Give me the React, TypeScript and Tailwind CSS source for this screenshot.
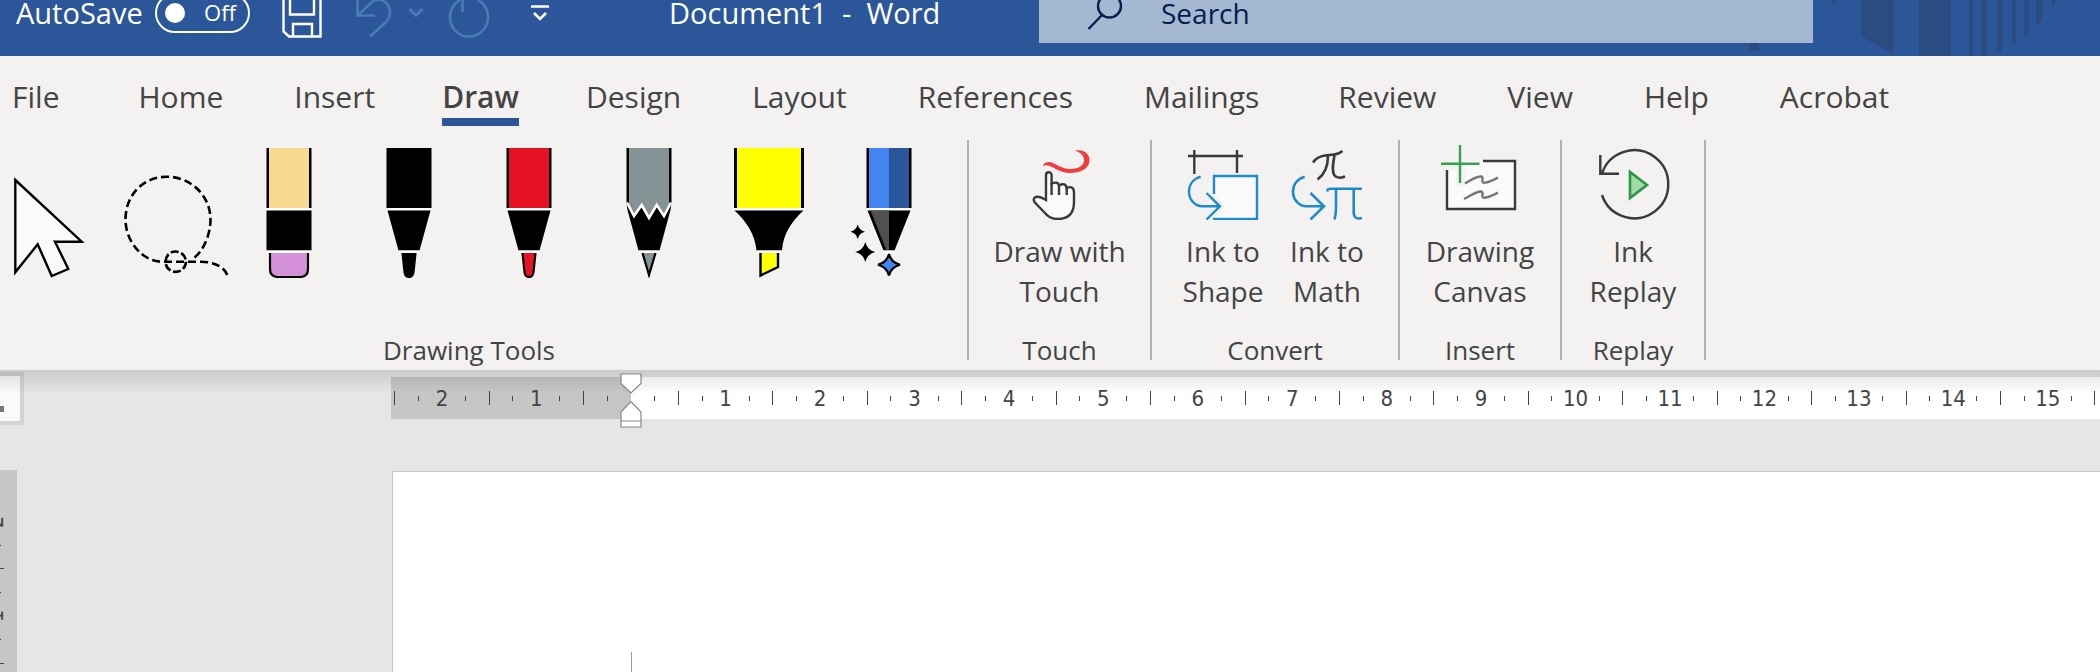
import type { ReactNode } from 'react'
import clsx from 'clsx'

const TABS = ['File', 'Home', 'Insert', 'Draw', 'Design', 'Layout', 'References', 'Mailings', 'Review', 'View', 'Help', 'Acrobat']

const STAR = 'M0 -10Q2 -2 10 0Q2 2 0 10Q-2 2 -10 0Q-2 -2 0 -10Z'

/* ---------- Quick access icons ---------- */

function SaveIcon() {
  return (
    <svg width="40" height="50" viewBox="0 0 40 50" fill="none" stroke="#fff" strokeWidth="2.4">
      <path d="M1.5 2V43.500L7 48.500H38.500V2Z" />
      <path d="M8 2V26.500H32V2M11 48V36H30V48" />
    </svg>
  )
}

function UndoIcon() {
  return (
    <svg width="36" height="48" viewBox="0 0 36 48" fill="none" stroke="#4a7ab8" strokeWidth="2.600">
      <path d="M1.500 6V26.500H19M2 26L15 14C22 7 34 12 34 24Q34 29 29 34L14 47.500" />
    </svg>
  )
}

function RedoIcon() {
  return (
    <svg width="42" height="50" viewBox="0 0 42 50" fill="none" stroke="#4a7ab8" strokeWidth="2.600">
      <path d="M12 12A19 19.500 0 1 0 30 12M14.500 24V6" />
    </svg>
  )
}

function Backdrop() {
  return (
    <svg className="absolute right-0 top-0" width="360" height="56" viewBox="1740 0 360 56" fill="#2b4c80" aria-hidden="true">
      <path d="M1749 0H1759V51H1749ZM1830 0H1835V6ZM1861 0H1894V54Q1872 44 1861 35ZM1919 0H1951V56H1919ZM1969 0H1973V56H1969ZM1982 0H1987V56H1982ZM1997 0H2002V50L1997 53ZM2012 0H2016V42L2012 45ZM2024 0H2029V33L2024 37ZM2036 0H2042V21L2036 26ZM2052 0H2057L2052 8Z" />
    </svg>
  )
}

/* ---------- Drawing tools ---------- */

function SelectTool() {
  return <path d="M26.300 32L92.700 93.700H66L79.300 121L62.700 128L48.700 96.300L26.300 124.300Z" fill="#fafafa" stroke="#000" strokeWidth="2.400" />
}

function LassoTool() {
  return (
    <g fill="none" stroke="#000" strokeWidth="2.600" strokeDasharray="8 4">
      <path d="M85.500 109.500C95 102 101.500 86 101.500 71.500C101.500 47 81 28.700 58 28.700C34 28.700 16.500 47 16.500 71.500C16.500 93 33 113.700 53 113.700H92C107 114 117 120 119 129.500" />
      <circle cx="66.700" cy="113.700" r="10.200" strokeDasharray="8 2.680" />
    </g>
  )
}

function EraserTool() {
  return (
    <>
      <path d="M37.500 0H82.500V60H37.500ZM37.500 62.500H82.500V102.500H37.500Z" />
      <path d="M40 0H80V60H40Z" fill="#f8da8f" />
      <path d="M37.500 60H82.500V62H37.500ZM37.500 102.500H82.500V105H37.500Z" fill="#fff" />
      <path d="M41 105V121Q41 129 49 129H71Q79 129 79 121V105" fill="#d490d9" stroke="#000" strokeWidth="2.200" />
    </>
  )
}

function PenTool({ color }: { color: string }) {
  return (
    <>
      <path d="M37.500 0H82.500V60H37.500ZM38.500 62.500H81.500L70.500 102.500H49.500Z" />
      <path d="M40 0H80V60H40Z" fill={color} />
      <path d="M37.500 60H82.500V62H37.500ZM49.500 102.500H70.500V105H49.500Z" fill="#fff" />
      <path d="M53.500 105L55.500 124Q56 129 60 129Q64 129 64.500 124L66.500 105" fill={color} stroke="#000" strokeWidth="2.200" />
    </>
  )
}

function PencilTool() {
  return (
    <>
      <path d="M37.500 0H82.500V55L81.500 62L70.500 102.500H49.500L38.500 62L37.500 55Z" />
      <path d="M40 0H80V58L75 68L67.700 57L60 70L52.700 57L45 68L40 58Z" fill="#859397" />
      <path d="M38 54.500L45 68L52.700 57L60 70L67.700 57L75 68L82 54.500" fill="none" stroke="#fff" strokeWidth="2.600" />
      <path d="M49.500 102.500H70.500V105H49.500Z" fill="#fff" />
      <path d="M53.500 105L60 127L66.500 105" fill="#859397" stroke="#000" strokeWidth="2.200" />
    </>
  )
}

function HighlighterTool() {
  return (
    <>
      <path d="M25 0H95V60H25ZM25.500 62.500H94.500C83 73 74 86 73 102.500H47.500C46 86 37 73 25.500 62.500Z" />
      <path d="M28 0H92V60H28Z" fill="#ffff00" />
      <path d="M25 60H95V62H25ZM47.500 102.500H73V105H47.500Z" fill="#fff" />
      <path d="M51.500 105V127.500L69 119V105" fill="#ffff00" stroke="#000" strokeWidth="2.400" />
    </>
  )
}

function ActionPenTool() {
  return (
    <>
      <path d="M37.500 0H82.500V60H37.500ZM38.500 62.500H81.500L65.500 102.500H54.500Z" />
      <path d="M40 0H60V60H40Z" fill="#4285f0" />
      <path d="M60 0H80V60H60Z" fill="#2b579a" />
      <path d="M41.500 62.500H60V102.500H57.500Z" fill="#505050" />
      <path d="M37.500 60H82.500V62H37.500ZM54 102.500H66V105H54Z" fill="#fff" />
      <path d={STAR} transform="translate(28.700 83.700) scale(.73)" />
      <path d={STAR} transform="translate(36.300 104)" />
      <path d="M60 106Q62 114.500 71 116.700Q62 119 60 127.500Q58 119 49 116.700Q58 114.500 60 106Z" fill="#4285f0" stroke="#000" strokeWidth="2.200" />
    </>
  )
}

const TOOLS: { name: string; art: ReactNode }[] = [
  { name: 'Select', art: <SelectTool /> },
  { name: 'Lasso Select', art: <LassoTool /> },
  { name: 'Eraser', art: <EraserTool /> },
  { name: 'Pen: Black', art: <PenTool color="#000" /> },
  { name: 'Pen: Red', art: <PenTool color="#e81224" /> },
  { name: 'Pencil: Gray', art: <PencilTool /> },
  { name: 'Highlighter: Yellow', art: <HighlighterTool /> },
  { name: 'Action Pen', art: <ActionPenTool /> },
]

/* ---------- Command icons, 80 x 80 ---------- */

function TouchIcon() {
  return (
    <>
      <path d="M23 25Q25 22 29 22C36 23 41 29 50 29C60 29 65 24 64 19Q63 13 55 10.500C64 9 70 14 69.500 21C69 29 60 33 50 33C40 33 34 27 28 25.500Q25 25 23.500 26Z" fill="#f03c3c" />
      <g fill="#fafafa" stroke="#3b3a39" strokeWidth="2.400">
        <path d="M26 60V35A2.800 2.800 0 0 1 31.600 35V43.500Q38 41 39 45.500Q45.500 42 46.700 48Q54 45 54 53V62Q54 79 37.500 79Q30 79 25 73L14.500 62Q12.500 58 16 57Q19 56 26 60Z" />
        <path d="M31.600 43V55M39 45V55M46.700 47V55" />
      </g>
    </>
  )
}

const CONVERT_ARROW = 'M17.700 36.700C10 39 6 45 6 51.700C6 60 12.500 66.300 19.300 66.300H37M23.500 53L37 66.300L23.500 79.500'

function ShapeIcon() {
  return (
    <g fill="none" strokeWidth="2.400">
      <path d="M5 16H60M11.300 10V34M54 10V33" stroke="#3b3a39" />
      <path d="M31 36H74V79H30L42.500 66.300L31 54.500Z" fill="#fafafa" />
      <path d="M31 54V36H74V79H30" stroke="#1e8bcd" />
      <path d={CONVERT_ARROW} stroke="#1e8bcd" />
    </g>
  )
}

function MathIcon() {
  return (
    <g fill="none" strokeWidth="2.600">
      <path d="M26 22.500Q30 16.500 38 15.500L47 14.500Q52 14 55.500 11M41 16Q41 32 30.500 39.500M47.500 15C46 24 44.500 31 47.500 35.500Q51 39.500 58 36.500" stroke="#3b3a39" />
      <path d={CONVERT_ARROW} stroke="#1e8bcd" />
      <path d="M40.500 51.500V50Q40.500 48.700 44 48.700H75M49 48.700V68Q49 74 47.500 79.500M66.700 48.700V73Q67 80 75 78" stroke="#1e8bcd" />
    </g>
  )
}

function CanvasIcon() {
  return (
    <g fill="none" strokeWidth="2.400">
      <path d="M7 30H25V21H75V69H7Z" fill="#fafafa" />
      <path d="M43 21H75V69H7V30" stroke="#3b3a39" />
      <path d="M16 28H25V45H16Z" fill="#f3f2f1" />
      <path d="M20 5V43M1 23.700H39.500" stroke="#37a150" />
      <path d="M25 43.500C32 39 37 36 41 36.500C45 37.500 40 42 44 42.700C49 42.500 53 40 58 37.700M24 59C32 55 37 51 41 51.500C45 52.500 40 57 44 57.700C49 57.500 53 55 58 52.700" stroke="#797775" />
    </g>
  )
}

function ReplayIcon() {
  return (
    <g fill="none" strokeWidth="2.400">
      <path d="M9 33.500A34 34 0 1 1 9 55M7.300 15V33.700H26" stroke="#3b3a39" />
      <path d="M37 32V58L54 45Z" fill="#a0dba8" stroke="#2f9549" strokeWidth="2.600" />
    </g>
  )
}

function Command({ top, bottom, children }: { top: string; bottom: string; children: ReactNode }) {
  return (
    <button className="flex w-[104px] flex-col items-center whitespace-nowrap text-[28px] leading-10">
      <svg width="80" height="80" viewBox="0 0 80 80" className="mb-[11px]">{children}</svg>
      <span>{top}</span>
      <span>{bottom}</span>
    </button>
  )
}

function Group({ label, className, children }: { label: string; className: string; children: ReactNode }) {
  return (
    <section className={clsx('flex h-[220px] shrink-0 flex-col justify-between border-r-2 border-[#b1b1b1]', className)}>
      <div className="flex justify-center">{children}</div>
      <div className="text-center text-[26px] leading-5">{label}</div>
    </section>
  )
}

/* ---------- Rulers ---------- */

// one mark per quarter: number on the whole, long tick on the half, short tick otherwise
function Mark({ quarter }: { quarter: number }) {
  return (
    <div className="flex min-w-0 flex-1 items-center justify-center">
      {quarter % 4 === 0 ? (
        <span className="pt-[2px]">{quarter / 4}</span>
      ) : (
        <span className={clsx('w-px shrink-0 bg-[#444]', quarter % 4 === 2 ? 'h-[14px]' : 'h-[5px]')} />
      )}
    </div>
  )
}

const LEFT_QUARTERS = Array.from({ length: 10 }, (_, i) => 10 - i)
const RIGHT_QUARTERS = Array.from({ length: 62 }, (_, i) => i + 1)
const VERTICAL_QUARTERS = [8, 7, 6, 5, 4, 3, 2]

export default function App() {
  return (
    <div className="flex min-h-screen flex-col overflow-hidden bg-[#e6e6e6] font-['Open_Sans','Noto_Sans',sans-serif] text-[#444]">
      {/* Title bar */}
      <header className="relative h-14 overflow-hidden bg-[#2b579a] text-[29px] leading-[25px] text-white">
        <Backdrop />
        <div className="relative flex h-[25px] items-center whitespace-nowrap">
          <div className="flex w-[669px] shrink-0 items-center pl-4">
            <span id="autosave" className="w-[139px]">AutoSave</span>
            <button role="switch" aria-checked="false" aria-labelledby="autosave" className="flex h-10 w-[95px] items-center justify-between rounded-full border-2 border-white pl-2 pr-3">
              <span className="size-5 rounded-full bg-white" />
              <span className="text-[22px]">Off</span>
            </button>
            <button aria-label="Save" className="ml-8"><SaveIcon /></button>
            <button aria-label="Undo" className="ml-[34px]"><UndoIcon /></button>
            <button aria-label="Undo history" className="ml-4">
              <svg width="16" height="10" viewBox="0 0 16 10" fill="none" stroke="#4a7ab8" strokeWidth="3"><path d="M1.500 1L8 7.500L14.500 1" /></svg>
            </button>
            <button aria-label="Redo" className="ml-6"><RedoIcon /></button>
            <button aria-label="Customize Quick Access Toolbar" className="ml-10">
              <svg width="20" height="16" viewBox="0 0 20 16" fill="none" stroke="#fff" strokeWidth="2.600"><path d="M1 1.500H19M4 8L10 14L16 8" /></svg>
            </button>
          </div>
          <h1 className="w-[370px] shrink-0 whitespace-pre">Document1  -  Word</h1>
          <label className="-my-5 flex h-[61px] w-[774px] items-center gap-[38px] bg-[#a5b8d1] pl-12 text-[28px] text-[#002050]">
            <svg width="36" height="38" viewBox="0 0 36 38" fill="none" stroke="#002050" strokeWidth="2.400" className="mb-1 shrink-0">
              <circle cx="22.500" cy="14" r="11.500" />
              <path d="M15 23L1.500 37" />
            </svg>
            <input type="text" placeholder="Search" aria-label="Search" className="min-w-0 flex-1 bg-transparent outline-none placeholder:text-[#002050]" />
          </label>
        </div>
      </header>

      {/* Ribbon */}
      <div className="h-[314px] overflow-hidden bg-[#f3f2f1]">
        <nav className="flex h-[84px] items-start gap-[71px] whitespace-nowrap pl-3 pt-5 text-[30px] leading-[42px]">
          {TABS.map(tab => (
            <a
              key={tab}
              href="#"
              className={clsx(
                (tab === 'File' || tab === 'Mailings') && 'pr-2',
                tab === 'Draw' && '-mx-1 border-b-8 border-[#2b579a] font-semibold',
              )}
            >
              {tab}
            </a>
          ))}
        </nav>
        <div className="flex">
          <Group label="Drawing Tools" className="-ml-[11px] w-[980px] pr-[18px]">
            {TOOLS.map(tool => (
              <button key={tool.name} aria-label={tool.name} className="pt-2">
                <svg width="120" height="130" viewBox="0 0 120 130">{tool.art}</svg>
              </button>
            ))}
          </Group>
          <Group label="Touch" className="w-[183px]">
            <Command top="Draw with" bottom="Touch"><TouchIcon /></Command>
          </Group>
          <Group label="Convert" className="w-[248px]">
            <Command top="Ink to" bottom="Shape"><ShapeIcon /></Command>
            <Command top="Ink to" bottom="Math"><MathIcon /></Command>
          </Group>
          <Group label="Insert" className="w-[162px]">
            <Command top="Drawing" bottom="Canvas"><CanvasIcon /></Command>
          </Group>
          <Group label="Replay" className="w-[144px]">
            <Command top="Ink" bottom="Replay"><ReplayIcon /></Command>
          </Group>
        </div>
      </div>

      {/* Horizontal ruler */}
      <div className="relative flex h-[101px] items-start font-['DejaVu_Sans_Condensed','DejaVu_Sans',sans-serif] text-[22px] leading-none">
        <button aria-label="Tab selector" className="mt-[2px] flex h-[53px] w-6 items-center border-y-4 border-r-4 border-[#d4d4d4] bg-[#fafafa] pt-5">
          <span className="h-[6px] w-1 bg-[#777]" />
        </button>
        <div className="ml-[367px] mt-[7px] flex h-[42px] w-[240px] shrink-0 overflow-hidden bg-[#c6c6c6]">
          <div className="-ml-2 mr-3 flex flex-1">
            {LEFT_QUARTERS.map(q => <Mark key={q} quarter={q} />)}
          </div>
        </div>
        <div className="mt-[7px] flex h-[42px] flex-1 overflow-hidden bg-white">
          <div className="-mr-[7px] ml-3 flex flex-1">
            {RIGHT_QUARTERS.map(q => <Mark key={q} quarter={q} />)}
          </div>
        </div>
        <div className="pointer-events-none absolute inset-x-0 top-0 h-6 bg-gradient-to-b from-black/12 to-transparent" />
        <svg className="absolute left-[620px] top-[3px]" width="22" height="55" viewBox="0 0 22 55" fill="#fff" stroke="#888" strokeWidth="1.200">
          <path d="M1 1H21V10.500L11 20L1 10.500Z" />
          <path d="M11 28.500L21 39V54H1V39ZM1 48H21" />
        </svg>
      </div>

      {/* Document */}
      <div className="flex flex-1">
        <div className="-mt-px w-[17px] shrink-0 overflow-hidden bg-[#c6c6c6] pt-10 font-['DejaVu_Sans_Condensed','DejaVu_Sans',sans-serif] text-[22px] leading-none">
          <div className="-ml-3 flex h-[165px] w-4 flex-col">
            {VERTICAL_QUARTERS.map(q => (
              <div key={q} className="flex min-h-0 flex-1 items-center justify-center">
                {q % 4 === 0 ? (
                  <span className="-rotate-90">{q / 4}</span>
                ) : (
                  <span className={clsx('h-px bg-[#444]', q % 4 === 2 ? 'w-4' : 'w-[10px]')} />
                )}
              </div>
            ))}
          </div>
        </div>
        <main className="ml-[375px] flex-1 border-l border-t border-[#c6c6c6] bg-white pl-[238px] pt-[180px]">
          <div className="h-5 w-px bg-[#999]" />
        </main>
      </div>
    </div>
  )
}
